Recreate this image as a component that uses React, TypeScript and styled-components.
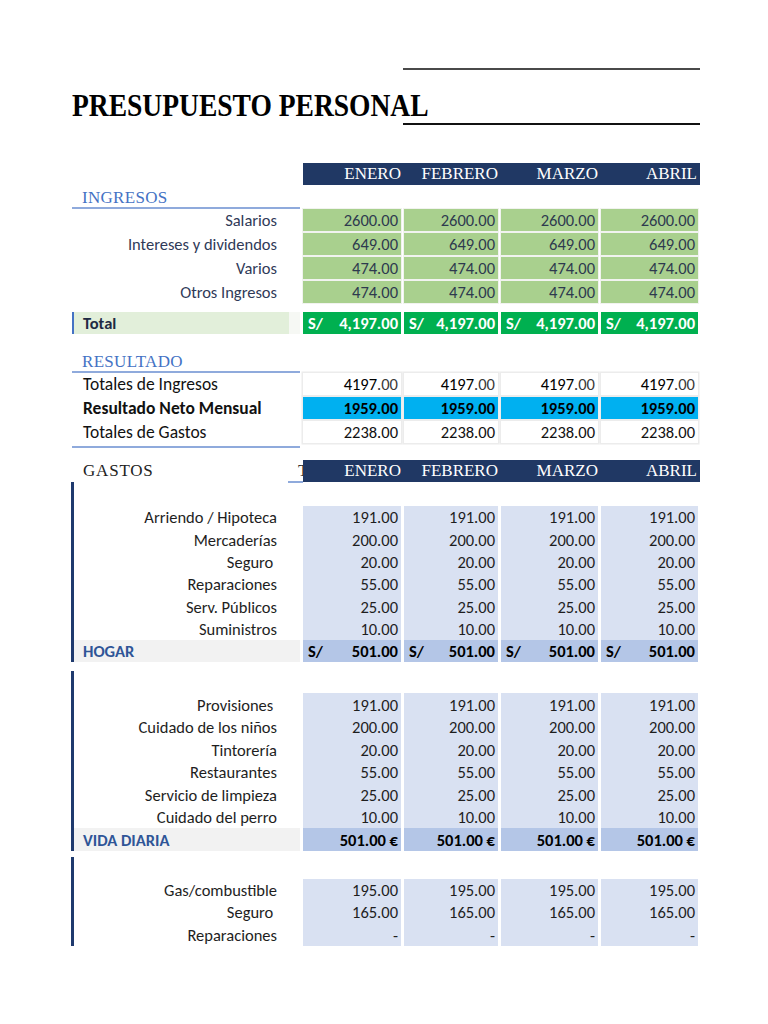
import React from "react";
import styled, { createGlobalStyle } from "styled-components";

const GlobalStyle = createGlobalStyle`
  html, body { margin: 0; padding: 0; background: #ffffff; }
  body { font-family: Carlito, Lato, "Liberation Sans", sans-serif; }
`;

const SERIF = `"Liberation Serif", "DejaVu Serif", serif`;
const SANS = `Carlito, Lato, "Liberation Sans", sans-serif`;
const NAVY = "#203864";

const Page = styled.div`
  width: 768px;
  height: 1024px;
  padding-left: 72px;
  box-sizing: border-box;
  overflow: hidden;
`;

const TopRule = styled.div`
  margin: 68px 0 0 331px;
  width: 297px;
  height: 2px;
  background: #4a4a4a;
`;

const Title = styled.h1`
  margin: 0;
  height: 51px;
  display: flex;
  align-items: flex-end;
  font-family: ${SERIF};
  font-weight: 700;
  font-size: 32px;
  line-height: 1;
  color: #000;
  transform: scaleX(0.86);
  transform-origin: left bottom;
  white-space: nowrap;
`;

const TitleRule = styled.div`
  margin: 2px 0 0 331px;
  width: 297px;
  height: 2px;
  background: #111;
`;

const MonthBar = styled.div<{ $mt: number }>`
  margin-top: ${(p) => p.$mt}px;
  display: grid;
  grid-template-columns: 231px 101px 97px 100px 99px;
  height: 22px;
`;

const BarLead = styled.div`
  display: flex;
  align-items: center;
  justify-content: space-between;
  font-family: ${SERIF};
  font-size: 17px;
  letter-spacing: 0.8px;
  color: #222;
  padding-left: 11px;
`;

const HiddenT = styled.span`
  align-self: stretch;
  width: 15px;
  box-sizing: border-box;
  padding-left: 10px;
  display: flex;
  align-items: center;
  overflow: hidden;
  border-bottom: 2px solid #8faadc;
  color: #333;
  margin-bottom: -1px;
`;

const Month = styled.div`
  background: ${NAVY};
  color: #fff;
  font-family: ${SERIF};
  font-size: 17px;
  display: flex;
  align-items: center;
  justify-content: flex-end;
  padding-right: 3px;
`;

const SectionTitle = styled.div<{ $h: number }>`
  width: 228px;
  height: ${(p) => p.$h}px;
  box-sizing: border-box;
  display: flex;
  align-items: flex-end;
  padding: 0 0 0 10px;
  border-bottom: 2px solid #8faadc;
  font-family: ${SERIF};
  font-size: 17px;
  line-height: 18px;
  letter-spacing: 0.3px;
  color: #4472c4;
`;

const Rows = styled.div<{ $gap: number; $mt: number }>`
  display: flex;
  flex-direction: column;
  gap: ${(p) => p.$gap}px;
  margin-top: ${(p) => p.$mt}px;
`;

const Row = styled.div<{ $first?: number; $h?: number; $mt?: number }>`
  display: grid;
  grid-template-columns: ${(p) => p.$first ?? 228}px 98px 94px 97px 97px;
  column-gap: 3px;
  height: ${(p) => p.$h ?? 22}px;
  margin-top: ${(p) => p.$mt ?? 0}px;
`;

type LabelKind = "income" | "total" | "result" | "resultBold" | "expense" | "group";

const Label = styled.div<{ $kind: LabelKind }>`
  display: flex;
  align-items: center;
  box-sizing: border-box;
  font-family: ${SANS};
  white-space: nowrap;
  ${(p) => {
    switch (p.$kind) {
      case "income":
        return `justify-content: flex-end; padding-right: 23px; font-size: 16.5px; color: #2f3a58;`;
      case "total":
        return `padding-left: 9px; font-size: 16.5px; font-weight: 700; color: #1f2a44;
          border-left: 2px solid #4472c4;
          background: linear-gradient(to right, #e2efda 215px, #f6f8f4 215px);`;
      case "result":
        return `padding-left: 11px; font-size: 17.5px; color: #111;`;
      case "resultBold":
        return `padding-left: 11px; font-size: 17.5px; font-weight: 700; color: #111;`;
      case "expense":
        return `justify-content: flex-end; padding-right: 23px; font-size: 16.5px; color: #1e1e1e;`;
      case "group":
        return `padding-left: 9px; font-size: 16.5px; font-weight: 700; color: #2f5597; background: #f2f2f2;`;
    }
  }}
`;

type CellKind = "green" | "total" | "white" | "cyan" | "blue" | "blueSum";

const cellStyles: Record<CellKind, string> = {
  green: `background: #a9d08e; color: #2e3a4e; box-shadow: 0 0 0 1px #f1f3ef;`,
  total: `background: #00b050; color: #ffffff; font-weight: 700;`,
  white: `background: #ffffff; color: #111; box-shadow: 0 0 0 1.5px #ececec;`,
  cyan: `background: #00b0f0; color: #000; font-weight: 700; box-shadow: 0 0 0 1.5px #ececec;`,
  blue: `background: #d9e1f2; color: #1e1e1e;`,
  blueSum: `background: #b4c6e7; color: #000; font-weight: 700;`,
};

const Cell = styled.div<{ $kind: CellKind }>`
  display: flex;
  align-items: center;
  justify-content: flex-end;
  padding: 0 3px 0 5px;
  font-family: ${SANS};
  font-size: 16.5px;
  white-space: nowrap;
  ${(p) => cellStyles[p.$kind]}
`;

const SplitCell = styled(Cell)`
  justify-content: space-between;
`;

const IntPart = styled.span`
  color: #000;
`;

const DecPart = styled.span`
  color: #3a3a3a;
`;

const Group = styled.div<{ $mt: number; $pt: number }>`
  margin-top: ${(p) => p.$mt}px;
  margin-left: -1px;
  padding-top: ${(p) => p.$pt}px;
  border-left: 3px solid #1f3a6e;
`;

const MONTHS = ["ENERO", "FEBRERO", "MARZO", "ABRIL"];

const income: [string, string][] = [
  ["Salarios", "2600.00"],
  ["Intereses y dividendos", "649.00"],
  ["Varios", "474.00"],
  ["Otros Ingresos", "474.00"],
];

const hogar: [string, string][] = [
  ["Arriendo / Hipoteca", "191.00"],
  ["Mercaderías", "200.00"],
  ["Seguro\u00a0", "20.00"],
  ["Reparaciones", "55.00"],
  ["Serv. Públicos", "25.00"],
  ["Suministros", "10.00"],
];

const vida: [string, string][] = [
  ["Provisiones\u00a0", "191.00"],
  ["Cuidado de los niños", "200.00"],
  ["Tintorería", "20.00"],
  ["Restaurantes", "55.00"],
  ["Servicio de limpieza", "25.00"],
  ["Cuidado del perro", "10.00"],
];

const transporte: [string, string][] = [
  ["Gas/combustible", "195.00"],
  ["Seguro\u00a0", "165.00"],
  ["Reparaciones", "-"],
];

const four = [0, 1, 2, 3];

const ExpenseRows: React.FC<{ items: [string, string][]; h: number }> = ({ items, h }) => (
  <>
    {items.map(([label, v]) => (
      <Row key={label} $first={226} $h={h}>
        <Label $kind="expense">{label}</Label>
        {four.map((i) => (
          <Cell key={i} $kind="blue">
            {v}
          </Cell>
        ))}
      </Row>
    ))}
  </>
);

export default function App() {
  return (
    <Page>
      <GlobalStyle />
      <TopRule />
      <Title>PRESUPUESTO PERSONAL</Title>
      <TitleRule />

      <MonthBar $mt={38}>
        <div />
        {MONTHS.map((m) => (
          <Month key={m}>{m}</Month>
        ))}
      </MonthBar>

      <SectionTitle $h={24}>INGRESOS</SectionTitle>
      <Rows $gap={2} $mt={0}>
        {income.map(([label, v]) => (
          <Row key={label}>
            <Label $kind="income">{label}</Label>
            {four.map((i) => (
              <Cell key={i} $kind="green">
                {v}
              </Cell>
            ))}
          </Row>
        ))}
      </Rows>
      <Row $mt={9}>
        <Label $kind="total">Total</Label>
        {four.map((i) => (
          <SplitCell key={i} $kind="total">
            <span>S/</span>
            <span>4,197.00</span>
          </SplitCell>
        ))}
      </Row>

      <SectionTitle $h={39}>RESULTADO</SectionTitle>
      <Rows $gap={2} $mt={0}>
        <Row>
          <Label $kind="result">Totales de Ingresos</Label>
          {four.map((i) => (
            <Cell key={i} $kind="white">
              <IntPart>4197</IntPart>
              <DecPart>.00</DecPart>
            </Cell>
          ))}
        </Row>
        <Row>
          <Label $kind="resultBold">Resultado Neto Mensual</Label>
          {four.map((i) => (
            <Cell key={i} $kind="cyan">
              1959.00
            </Cell>
          ))}
        </Row>
        <Row>
          <Label $kind="result">Totales de Gastos</Label>
          {four.map((i) => (
            <Cell key={i} $kind="white">
              2238.00
            </Cell>
          ))}
        </Row>
      </Rows>
      <SectionTitle $h={5} />

      <MonthBar $mt={12}>
        <BarLead>
          <span>GASTOS</span>
          <HiddenT>T</HiddenT>
        </BarLead>
        {MONTHS.map((m) => (
          <Month key={m}>{m}</Month>
        ))}
      </MonthBar>

      <Group $mt={0} $pt={24}>
        <ExpenseRows items={hogar} h={22.35} />
        <Row $first={226} $h={22.35}>
          <Label $kind="group">HOGAR</Label>
          {four.map((i) => (
            <SplitCell key={i} $kind="blueSum">
              <span>S/</span>
              <span>501.00</span>
            </SplitCell>
          ))}
        </Row>
      </Group>

      <Group $mt={9} $pt={22}>
        <ExpenseRows items={vida} h={22.5} />
        <Row $first={226} $h={22.5}>
          <Label $kind="group">VIDA DIARIA</Label>
          {four.map((i) => (
            <Cell key={i} $kind="blueSum">
              501.00 €
            </Cell>
          ))}
        </Row>
      </Group>

      <Group $mt={6} $pt={22}>
        <ExpenseRows items={transporte} h={22.3} />
      </Group>
    </Page>
  );
}
